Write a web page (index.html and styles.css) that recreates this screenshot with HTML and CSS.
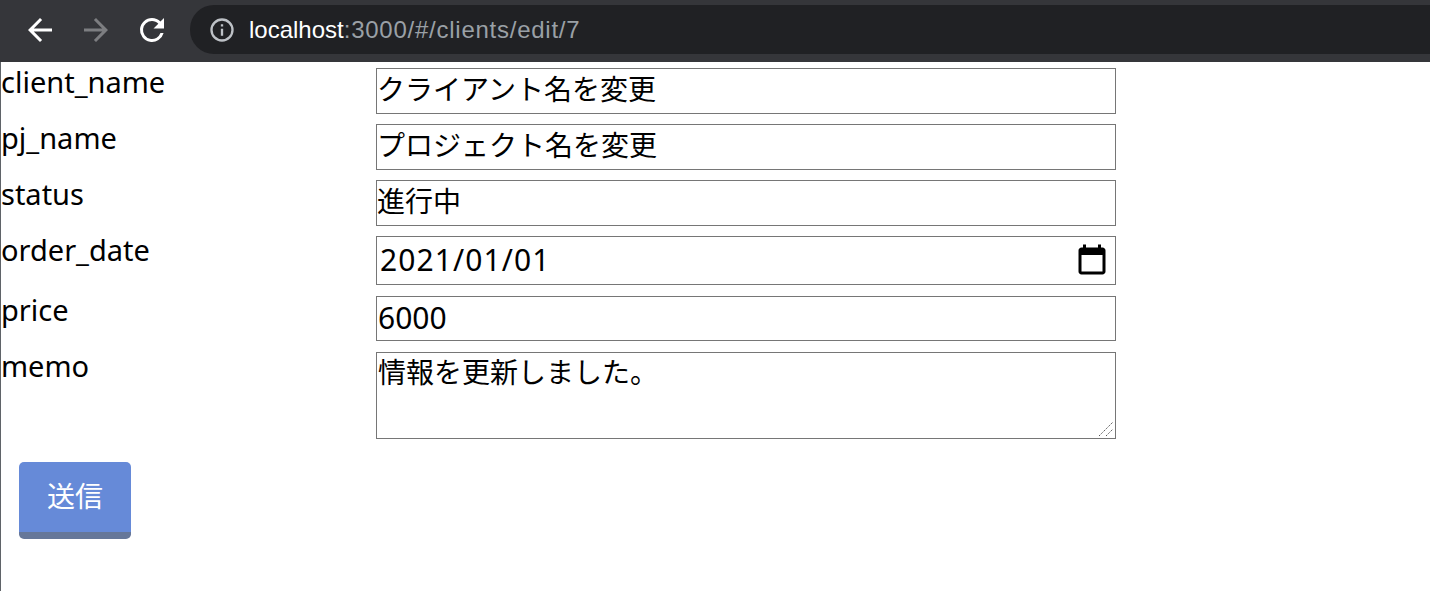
FILE: index.html
```html
<!DOCTYPE html>
<html lang="ja">

<head>
    <meta charset="UTF-8" />
    <title>clients edit</title>
    <link rel="stylesheet" href="styles.css">
</head>

<body>
    <!-- browser toolbar -->
    <div class="toolbar">
        <svg class="nav-icon" viewBox="0 0 24 24"><path fill="#fff" d="M20 11H7.83l5.59-5.59L12 4l-8 8 8 8 1.41-1.41L7.83 13H20v-2z" /></svg>
        <svg class="nav-icon" viewBox="0 0 24 24"><path fill="#7d7e81" d="M4 11h12.17l-5.59-5.59L12 4l8 8-8 8-1.41-1.41L16.17 13H4v-2z" /></svg>
        <svg class="nav-icon" viewBox="0 0 24 24"><path fill="#fff" d="M17.65 6.35A7.96 7.96 0 0 0 12 4a8 8 0 1 0 7.73 10h-2.08A6 6 0 1 1 12 6c1.66 0 3.14.69 4.22 1.78L13 11h7V4l-2.35 2.35z" /></svg>
        <div class="omnibox">
            <svg class="info-icon" viewBox="0 0 24 24"><path fill="#bdc1c6" d="M11 7h2v2h-2zm0 4h2v6h-2zm1-9a10 10 0 1 0 0 20 10 10 0 0 0 0-20zm0 18a8 8 0 1 1 0-16 8 8 0 0 1 0 16z" /></svg>
            <span class="host">localhost</span><span class="url-rest">:3000/#/clients/edit/7</span>
        </div>
    </div>

    <form class="edit-form">
        <div class="fields">
            <label class="field-label">client_name</label>
            <input class="field-input" type="text" value="クライアント名を変更">
            <label class="field-label">pj_name</label>
            <input class="field-input" type="text" value="プロジェクト名を変更">
            <label class="field-label">status</label>
            <input class="field-input" type="text" value="進行中">
            <label class="field-label">order_date</label>
            <div class="date-box">
                <input class="date-input" type="text" value="2021/01/01">
                <svg class="calendar" viewBox="0 0 24 24"><path d="M19 3h-1V1h-2v2H8V1H6v2H5c-1.11 0-1.99.9-1.99 2L3 19c0 1.1.89 2 2 2h14c1.1 0 2-.9 2-2V5c0-1.1-.9-2-2-2zm0 16H5V8h14v11z" /></svg>
            </div>
            <label class="field-label">price</label>
            <input class="field-input price-input" type="text" value="6000">
            <label class="field-label">memo</label>
            <div class="area-box">
                <textarea class="field-area">情報を更新しました。</textarea>
                <!-- resize grip -->
                <svg class="grip" viewBox="0 0 14 14"><path d="M0 14L14 0M7 14L14 7" stroke="#555" stroke-width="1" stroke-dasharray="1.4 1" fill="none" /></svg>
            </div>
        </div>
        <button class="send-btn" type="button">送信</button>
    </form>
</body>

</html>
```

FILE: styles.css
```css
* {
    margin: 0;
    padding: 0;
    box-sizing: border-box;
}

html,
body {
    height: 100%;
    overflow: hidden;
}

body {
    background: #fff;
    font-family: "Noto Sans", "Noto Sans CJK JP", sans-serif;
}

.toolbar {
    height: 62px;
    background: #35363a;
    display: flex;
    align-items: center;
    padding: 0 0 3px 22px;
    gap: 20px;
}

.nav-icon {
    width: 36px;
    height: 36px;
    flex: none;
}

.omnibox {
    flex: 1;
    height: 49px;
    background: #202124;
    border-radius: 24px 0 0 24px;
    display: flex;
    align-items: center;
    padding-left: 18px;
    font-size: 24px;
    font-family: "Liberation Sans", sans-serif;
}

.info-icon {
    width: 28px;
    height: 28px;
    margin-right: 13px;
}

.host {
    color: #fff;
}

.url-rest {
    color: #9aa0a6;
    letter-spacing: 0.75px;
}

.edit-form {
    height: 529px;
    border-left: 1px solid #5f6368;
    padding: 6px 0 0 0;
}

.fields {
    display: grid;
    grid-template-columns: 375px 740px;
    row-gap: 10px;
    color: #000;
}

.field-label {
    font-size: 29px;
    line-height: 28px;
}

.field-input,
.field-area,
.date-box {
    width: 100%;
    border: 1px solid #767676;
    font-family: "Noto Sans CJK JP", sans-serif;
    font-size: 28px;
    color: #000;
    background: #fff;
    outline: none;
    border-radius: 0;
}

.field-input {
    height: 46px;
    padding: 0 0 6px;
}

.price-input {
    height: 45px;
    margin-bottom: 1px;
    padding: 0 1px 2px;
    font-family: "Noto Sans", sans-serif;
    font-size: 30px;
}

.date-box {
    height: 49px;
    margin-bottom: 1px;
    display: flex;
    align-items: center;
    padding: 0 5px 0 3px;
}

.date-input {
    flex: 1;
    min-width: 0;
    border: none;
    outline: none;
    padding-bottom: 2px;
    font-family: "Noto Sans", sans-serif;
    font-size: 30px;
    letter-spacing: 1.1px;
}

.calendar {
    width: 36px;
    height: 36px;
    flex: none;
}

.area-box {
    position: relative;
    height: 87px;
}

.field-area {
    display: block;
    height: 100%;
    padding: 0 1px;
    resize: none;
    line-height: 36px;
    overflow: hidden;
}

.grip {
    position: absolute;
    right: 3px;
    bottom: 3px;
    width: 14px;
    height: 14px;
}

.send-btn {
    display: block;
    width: 112px;
    height: 77px;
    margin: 23px 0 0 18px;
    padding-bottom: 4px;
    border: none;
    border-bottom: 7px solid #667799;
    border-radius: 5px;
    background: #668ad8;
    color: #fff;
    font-family: "Noto Sans CJK JP", sans-serif;
    font-size: 28px;
}
```
